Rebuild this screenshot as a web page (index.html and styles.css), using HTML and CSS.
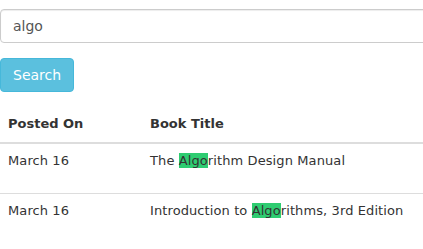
FILE: index.html
```html
<!DOCTYPE html>
<html>
<head>
<meta charset="utf-8">
<link rel="stylesheet" href="styles.css">
</head>
<body>
<div class="page">
  <form class="search-form">
    <input class="search-input" type="text" value="algo">
    <button class="btn-search" type="button">Search</button>
  </form>
  <table class="results">
    <colgroup><col class="col-date"><col></colgroup>
    <thead>
      <tr><th>Posted On</th><th>Book Title</th></tr>
    </thead>
    <tbody>
      <tr><td>March 16</td><td>The <mark class="hl">Algo</mark>rithm Design Manual</td></tr>
      <tr><td>March 16</td><td>Introduction to <mark class="hl">Algo</mark>rithms, 3rd Edition</td></tr>
    </tbody>
  </table>
</div>
</body>
</html>
```
FILE: styles.css
```css
html, body {
  margin: 0;
  padding: 0;
  background: #fff;
  overflow: hidden;
}
.page {
  width: 440px;
  padding-top: 9px;
  font-family: "DejaVu Sans", Verdana, sans-serif;
  font-size: 13px;
  line-height: 1.42857;
  color: #333;
}
.search-form {
  margin: 0;
}
.search-input {
  display: block;
  box-sizing: border-box;
  width: 440px;
  height: 34px;
  margin: 0;
  padding: 6px 12px;
  border: 1px solid #ccc;
  border-radius: 4px;
  box-shadow: inset 0 1px 1px rgba(0,0,0,.075);
  font-family: "DejaVu Sans", Verdana, sans-serif;
  font-size: 14px;
  color: #555;
  outline: none;
}
.btn-search {
  display: block;
  box-sizing: border-box;
  height: 34px;
  margin-top: 15px;
  padding: 6px 12px;
  border: 1px solid #46b8da;
  border-radius: 4px;
  background: #5bc0de;
  color: #fff;
  font-family: "DejaVu Sans", Verdana, sans-serif;
  font-size: 14px;
  line-height: 20px;
}
.results {
  width: 100%;
  margin-top: 15px;
  border-collapse: collapse;
  border-spacing: 0;
  table-layout: fixed;
}
.col-date {
  width: 142px;
}
.results th {
  text-align: left;
  font-weight: bold;
  padding: 8px;
  border-bottom: 2px solid #ddd;
  vertical-align: bottom;
}
.results td {
  padding: 8px 8px 23px 8px;
  vertical-align: top;
  white-space: nowrap;
  letter-spacing: 0.1px;
}
.results tbody tr + tr td {
  border-top: 1px solid #ddd;
}
.hl {
  background: #2ecc71;
  color: #333;
  padding: 0;
}
```
